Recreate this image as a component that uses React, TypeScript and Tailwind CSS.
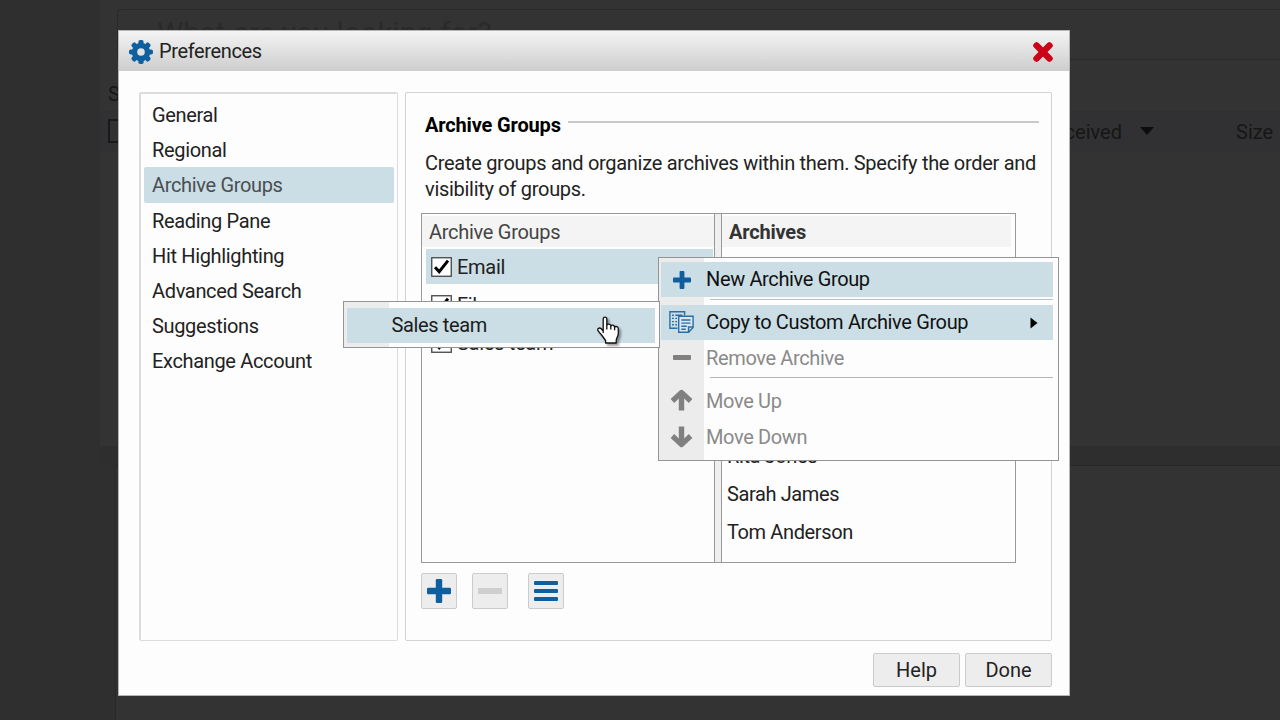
import type { ReactNode } from 'react';

const SECTIONS = [
  'General',
  'Regional',
  'Archive Groups',
  'Reading Pane',
  'Hit Highlighting',
  'Advanced Search',
  'Suggestions',
  'Exchange Account',
];

const GROUPS = ['Email', 'File', 'Sales team'];
const ARCHIVES = ['Rita Jones', 'Sarah James', 'Tom Anderson'];

function GearIcon() {
  return (
    <svg className="w-6 h-6 mt-px" viewBox="-12 -12 24 24" fill="#0f5f9f">
      {[0, 45, 90, 135].map((a) => (
        <rect key={a} x="-2.6" y="-12" width="5.2" height="24" rx="1.8" transform={`rotate(${a})`} />
      ))}
      <circle r="9.2" />
      <circle r="3.8" fill="#e2e2e2" />
    </svg>
  );
}

function CloseIcon() {
  return (
    <svg className="w-5 h-5 mt-[2px]" viewBox="0 0 20 20" stroke="#cc0418">
      <path d="M3.6 3.6L16.4 16.4M16.4 3.6L3.6 16.4" strokeLinecap="square" strokeWidth="5" />
      <path d="M3.6 3.6L16.4 16.4M16.4 3.6L3.6 16.4" strokeLinecap="round" strokeWidth="6.4" />
    </svg>
  );
}

function PlusIcon({ className }: { className: string }) {
  return (
    <svg className={className} viewBox="0 0 24 24" fill="#0f5f9f">
      <rect x="8.8" y="0" width="6.4" height="24" rx="1.2" />
      <rect x="0" y="8.8" width="24" height="6.4" rx="1.2" />
    </svg>
  );
}

function CopyIcon() {
  return (
    <svg className="w-[25px] h-[22px] mb-[2px]" viewBox="0 0 25 22" fill="none" stroke="#2c6da6" strokeWidth="1.4">
      <path d="M8.5 17.3H0.9V0.8H15.6V4.5" />
      <path d="M3 4.2H4.8M6.3 4.2H13.3M3 7.4H4.8M6.3 7.4H8M3 10.6H4.8M6.3 10.6H8M3 13.8H4.8M6.3 13.8H8" />
      <path d="M9.7 5.2H24.1V16.5L19.6 21.2H9.7Z" fill="#d9e8f0" />
      <path d="M24.1 16H19.6V21.2" strokeWidth="1.6" />
      <path d="M12.3 9H21.5M12.3 12.1H21.5M12.3 15.2H17.8M12.3 18.2H16.8" />
    </svg>
  );
}

function ArrowIcon({ down }: { down?: boolean }) {
  return (
    <svg
      className={down ? 'w-[23px] h-[22px] rotate-180' : 'w-[23px] h-[22px] mb-[2px]'}
      viewBox="0 0 23 22"
      fill="none"
      stroke="#808080"
    >
      <path d="M2.4 12L11.5 3.4L20.6 12" strokeWidth="5.2" strokeLinejoin="round" />
      <path d="M11.5 4.5V21.5" strokeWidth="5.4" />
    </svg>
  );
}

function HandCursor() {
  return (
    <svg
      className="w-6 h-7 drop-shadow-[2px_2px_1px_rgba(0,0,0,0.4)]"
      viewBox="0 0 24 28"
      fill="#fff"
      stroke="#111"
      strokeWidth="1.3"
      strokeLinejoin="round"
    >
      <path d="M6.2 17V3C6.2 0.4 9.8 0.4 9.8 3V9.2C10.6 7.6 13.4 7.8 13.8 9.8C14.8 8.6 17.2 9 17.6 11C18.8 10 21.3 10.6 21.3 12.8V17.5C21.3 20.5 19.4 21.5 19.2 24.5V27H8.6V24.5L5 19.5L1.3 15.2C-0.2 12.7 2.4 11 4.2 12.8L6.2 15" />
      <path d="M9.8 9.2V13.5M13.8 9.8V13.5M17.6 11V14.2" fill="none" />
    </svg>
  );
}

function Checkbox() {
  return (
    <svg className="w-[21px] h-5 shrink-0" viewBox="0 0 21 20">
      <rect x="0.75" y="0.75" width="19.5" height="18.5" fill="#fff" stroke="#444" strokeWidth="1.3" />
      <path d="M4 10.2L8.2 14.6L17 3.6" fill="none" stroke="#000" strokeWidth="3" />
    </svg>
  );
}

function MenuRow({
  icon,
  label,
  active,
  submenu,
}: {
  icon: ReactNode;
  label: string;
  active?: boolean;
  submenu?: boolean;
}) {
  return (
    <div
      className={
        active
          ? 'flex items-center h-[35px] bg-[#cbdde5] text-[#111]'
          : 'flex items-center h-[35px] text-[#8a8a8a]'
      }
    >
      <span className="w-[45px] pr-[4px] flex justify-center shrink-0">{icon}</span>
      <span className={active ? 'flex-1 pb-px' : 'flex-1'}>{label}</span>
      {submenu && (
        <svg className="w-2 h-3 mr-[15px]" viewBox="0 0 8 12">
          <path d="M0.5 0.5L7.5 6L0.5 11.5Z" />
        </svg>
      )}
    </div>
  );
}

function ContextMenu() {
  return (
    <div className="absolute left-[658px] top-[257px] w-[401px] h-[204px] border border-[#949494] bg-[linear-gradient(90deg,#ececec_45px,#fdfdfd_45px)] pl-[2px] pr-[5px] pt-1 tracking-[-0.36px]">
      <MenuRow active icon={<PlusIcon className="w-[18px] h-[18px]" />} label="New Archive Group" />
      <div className="ml-[49px] mt-[2px] mb-[5px] h-[1px] bg-[#b9c2c6]" />
      <MenuRow active submenu icon={<CopyIcon />} label="Copy to Custom Archive Group" />
      <MenuRow icon={<span className="w-[18px] h-[5px] rounded-[1px] bg-[#808080]" />} label="Remove Archive" />
      <div className="ml-[49px] mt-[2px] mb-[5px] h-[1px] bg-[#b5b5b5]" />
      <MenuRow icon={<ArrowIcon />} label="Move Up" />
      <div className="h-px" />
      <MenuRow icon={<ArrowIcon down />} label="Move Down" />
    </div>
  );
}

function SubMenu() {
  return (
    <div className="absolute left-[343px] top-[301px] w-[317px] h-[47px] border border-[#949494] bg-[linear-gradient(90deg,#ececec_45px,#fdfdfd_45px)] pl-[3px] pr-1 pt-[6px] tracking-[-0.36px]">
      <div className="h-[35px] bg-[#cbdde5] pl-[44.5px] leading-[35px] text-[#1c1c1c]">Sales team</div>
    </div>
  );
}

// Dimmed mail page behind the dialog
function Backdrop() {
  return (
    <div className="flex h-full bg-[#2f2f2f] tracking-normal text-[#161616]">
      <div className="w-[100px] shrink-0" />
      <div className="flex-1 flex flex-col">
        <div className="h-[446px] bg-[#333333] pt-[9px]">
          <div className="ml-[17px] h-[51px] rounded-l border border-r-0 border-[#292929] pl-[39px] text-[29.7px] leading-[45px] text-[#2a2a2a]">
            What are you looking for?
          </div>
          <div className="h-[51px] pl-2 pt-[22px] leading-6">Search</div>
          <div className="h-10 flex items-center bg-[#313133] border-y border-[#303032]">
            <span className="ml-2 w-6 h-6 border-2 border-[#191919]" />
            <span className="flex-1" />
            <span className="pt-px">Received</span>
            <svg className="w-[14px] h-2 ml-[18px]" viewBox="0 0 14 8">
              <path d="M0 0H14L7 8Z" fill="#0d0d0d" />
            </svg>
            <span className="ml-[82px] w-[44px] pt-px">Size</span>
          </div>
        </div>
        <div className="h-[19px] bg-[#2e2e2e]" />
        <div className="flex-1 ml-[15px] border-t border-l border-[#292929] bg-[#333333]" />
      </div>
    </div>
  );
}

function ToolButton({ children }: { children: ReactNode }) {
  return (
    <span className="px-[5px] h-9 flex items-center justify-center rounded-[2px] border border-[#cbcbcb] bg-[#ededed]">
      {children}
    </span>
  );
}

function GroupTable() {
  return (
    <div className="ml-[15px] mt-[11px] w-[595px] h-[350px] flex border border-[#999]">
      <div className="w-[293px] pt-[2px] border-r border-[#999]">
        <div className="h-[31px] bg-[#f4f4f4] pl-[7px] leading-[33px] text-[#444]">Archive Groups</div>
        {GROUPS.map((name, i) => (
          <div
            key={name}
            className={
              i === 0
                ? 'mt-[2px] mb-1 ml-1 mr-[1px] h-[35px] pl-[5px] flex items-center gap-[5px] bg-[#cbdde5]'
                : 'mb-1 ml-1 h-[34px] pl-[5px] flex items-center gap-[5px]'
            }
          >
            <Checkbox />
            <span>{name}</span>
          </div>
        ))}
      </div>
      <div className="w-[7px] bg-[#efefef] border-r border-[#999]" />
      <div className="flex-1 pt-[2px] flex flex-col">
        <div className="h-[31px] shrink-0 bg-[#f4f4f4] pl-[7px] mr-1 leading-[33px] font-bold tracking-[-0.2px] text-[#333]">
          Archives
        </div>
        <div className="flex-1 flex flex-col justify-end pb-[11px]">
          {ARCHIVES.map((name) => (
            <div key={name} className="h-[38px] pl-[5px] leading-[38px] tracking-[-0.38px]">
              {name}
            </div>
          ))}
        </div>
      </div>
    </div>
  );
}

function PreferencesDialog() {
  return (
    <div className="absolute left-[118px] top-[30px] w-[952px] h-[666px] flex flex-col border border-[#b5b5b5] bg-[#fdfdfd]">
      <div className="h-[40px] shrink-0 flex items-center pl-[10px] pr-4 bg-linear-to-b from-[#f4f4f4] to-[#cdcdcd]">
        <GearIcon />
        <span className="ml-[6px] flex-1 leading-[38px] pb-px tracking-[-0.36px]">Preferences</span>
        <CloseIcon />
      </div>
      <div className="flex gap-[7px] pl-5 pt-[21px]">
        <div className="w-[259px] h-[549px] rounded-[2px] border-2 border-[#dcdcdc] border-b border-r px-[3px] pt-[3px] tracking-[-0.34px]">
          {SECTIONS.map((name, i) => (
            <div
              key={name}
              className={
                i === 2
                  ? 'h-[35.2px] leading-[36px] pl-[8px] rounded-[2px] bg-[#cbdde5] text-[#4a4f52]'
                  : 'h-[35.2px] leading-[36.4px] pl-[8px]'
              }
            >
              {name}
            </div>
          ))}
        </div>
        <div className="w-[647px] h-[549px] rounded-[2px] border border-[#d2d2d2]">
          <div className="flex ml-[19px] mt-5">
            <h2 className="w-[143px] font-bold leading-6 tracking-[-0.15px] text-black">Archive Groups</h2>
            <div className="w-[471px] h-[2px] mt-[8px] bg-[#c9c9c9]" />
          </div>
          <p className="ml-[19px] mt-[14px] leading-[25.5px] whitespace-nowrap">
            Create groups and organize archives within them. Specify the order and
            <br />
            visibility of groups.
          </p>
          <GroupTable />
          <div className="flex ml-[15px] mt-[10px]">
            <ToolButton>
              <PlusIcon className="w-6 h-6" />
            </ToolButton>
            <span className="w-[15px]" />
            <ToolButton>
              <span className="w-6 h-[6px] bg-[#cfcfcf]" />
            </ToolButton>
            <span className="w-5" />
            <ToolButton>
              <span className="flex flex-col gap-1">
                <span className="w-6 h-1 rounded-[1px] bg-[#0f5f9f]" />
                <span className="w-6 h-1 rounded-[1px] bg-[#0f5f9f]" />
                <span className="w-6 h-1 rounded-[1px] bg-[#0f5f9f]" />
              </span>
            </ToolButton>
          </div>
        </div>
      </div>
      <div className="flex justify-end gap-[5px] mt-3 pr-[17px] tracking-normal">
        <button className="w-[87px] h-[34px] rounded-[2px] border border-[#cbcbcb] bg-[#ededed]">Help</button>
        <button className="w-[87px] h-[34px] rounded-[2px] border border-[#cbcbcb] bg-[#ededed]">Done</button>
      </div>
    </div>
  );
}

export default function App() {
  return (
    <div className="relative w-[1280px] h-[720px] overflow-hidden font-[Roboto,sans-serif] text-[20px] tracking-[-0.29px] text-[#222]">
      <Backdrop />
      <PreferencesDialog />
      <ContextMenu />
      <SubMenu />
      <div className="absolute left-[597px] top-[316px]">
        <HandCursor />
      </div>
    </div>
  );
}
